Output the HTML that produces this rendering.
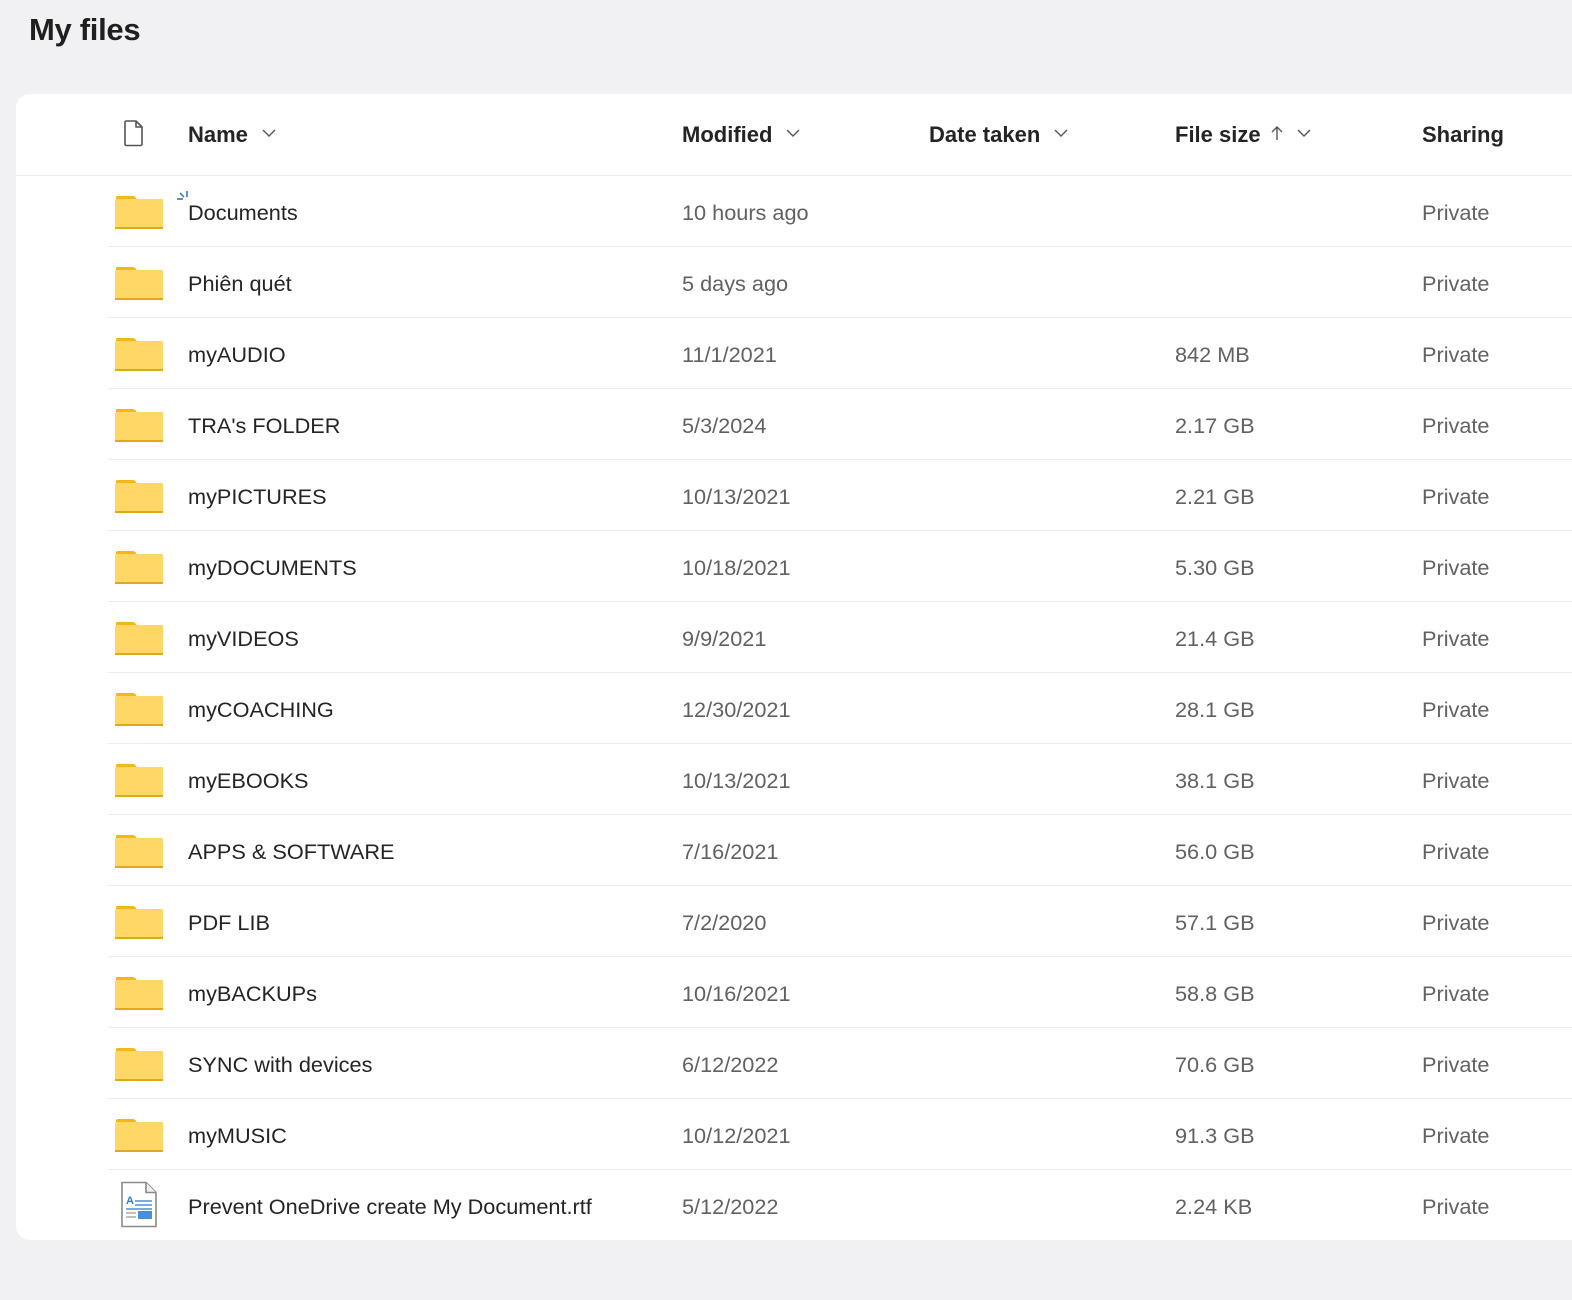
<!DOCTYPE html>
<html><head><meta charset="utf-8"><style>
*{margin:0;padding:0;box-sizing:border-box}
body{width:1572px;height:1300px;background:#f1f1f4;font-family:"Liberation Sans","DejaVu Sans",sans-serif;position:relative;overflow:hidden;color:#242424}
h1{position:absolute;left:29px;top:12px;font-size:31px;font-weight:600;color:#1f1f1f;letter-spacing:-0.3px}
.card{position:absolute;left:16px;top:94px;width:1600px;height:1146px;background:#fff;border-radius:14px}
.hdr{position:absolute;left:0;top:0;width:100%;height:82px;border-bottom:1px solid #ececec}
.h{position:absolute;top:28px;font-size:22px;font-weight:700;color:#242424;white-space:nowrap}
.chev{display:inline-block;vertical-align:middle;margin-left:14px;margin-top:-6px}
.row{position:absolute;left:92px;width:1600px;height:71px;border-bottom:1px solid #ebebeb}
.row span{position:absolute;top:24px;font-size:21.7px;white-space:nowrap}
.n{left:80px;color:#242424}
.m{left:574px;color:#616161}
.s{left:1067px;color:#616161}
.p{left:1314px;color:#616161}
.fold{position:absolute;left:7px;top:19px}
</style></head><body>
<h1>My files</h1>
<div class="card">
 <div class="hdr">
  <svg style="position:absolute;left:107px;top:25px" width="22" height="28" viewBox="0 0 22 28"><path d="M3 2h10l6 6v17a1.5 1.5 0 0 1-1.5 1.5h-14A1.5 1.5 0 0 1 2 25V3.5A1.5 1.5 0 0 1 3 2z M13 2v6h6" fill="none" stroke="#555" stroke-width="1.6" stroke-linejoin="round"/></svg>
  <div class="h" style="left:172px">Name<svg class="chev" width="14" height="9" viewBox="0 0 14 9"><path d="M1 1l6 6 6-6" fill="none" stroke="#555" stroke-width="1.4"/></svg></div>
  <div class="h" style="left:666px">Modified<svg class="chev" width="14" height="9" viewBox="0 0 14 9"><path d="M1 1l6 6 6-6" fill="none" stroke="#555" stroke-width="1.4"/></svg></div>
  <div class="h" style="left:913px">Date taken<svg class="chev" width="14" height="9" viewBox="0 0 14 9"><path d="M1 1l6 6 6-6" fill="none" stroke="#555" stroke-width="1.4"/></svg></div>
  <div class="h" style="left:1159px">File size<svg style="display:inline-block;vertical-align:middle;margin-left:10px;margin-top:-6px" width="12" height="16" viewBox="0 0 12 16"><path d="M6 15V2M1 7l5-5 5 5" fill="none" stroke="#555" stroke-width="1.4"/></svg><svg class="chev" width="14" height="9" viewBox="0 0 14 9"><path d="M1 1l6 6 6-6" fill="none" stroke="#555" stroke-width="1.4"/></svg></div>
  <div class="h" style="left:1406px">Sharing</div>
 </div>
</div>
<svg width="0" height="0" style="position:absolute"><defs><g id="f"><path d="M1 2.5Q1 1 2.5 1h15q3 0 4 3h-20.5z" fill="#f3b71a"/><rect x="0" y="4" width="48" height="30" rx="1.5" fill="#ffd767"/><rect x="0" y="32" width="48" height="2" fill="#e0a91a"/><path d="M0 4h20l4 3h24v-1.5Q48 4 46.5 4z" fill="#ffd767"/></g></defs></svg>
<div style="position:absolute;left:16px;top:176px">
<div class="row" style="top:0"><svg class="fold" width="48" height="34"><use href="#f"/></svg><svg style="position:absolute;left:68px;top:14px" width="14" height="12"><path d="M11 1v6M1 9h6M4 3l4 4" stroke="#2a6fb0" stroke-width="1.5" fill="none"/></svg><span class="n">Documents</span><span class="m">10 hours ago</span><span class="p">Private</span></div>
<div class="row" style="top:71px"><svg class="fold" width="48" height="34"><use href="#f"/></svg><span class="n">Phiên quét</span><span class="m">5 days ago</span><span class="p">Private</span></div>
<div class="row" style="top:142px"><svg class="fold" width="48" height="34"><use href="#f"/></svg><span class="n">myAUDIO</span><span class="m">11/1/2021</span><span class="s">842 MB</span><span class="p">Private</span></div>
<div class="row" style="top:213px"><svg class="fold" width="48" height="34"><use href="#f"/></svg><span class="n">TRA's FOLDER</span><span class="m">5/3/2024</span><span class="s">2.17 GB</span><span class="p">Private</span></div>
<div class="row" style="top:284px"><svg class="fold" width="48" height="34"><use href="#f"/></svg><span class="n">myPICTURES</span><span class="m">10/13/2021</span><span class="s">2.21 GB</span><span class="p">Private</span></div>
<div class="row" style="top:355px"><svg class="fold" width="48" height="34"><use href="#f"/></svg><span class="n">myDOCUMENTS</span><span class="m">10/18/2021</span><span class="s">5.30 GB</span><span class="p">Private</span></div>
<div class="row" style="top:426px"><svg class="fold" width="48" height="34"><use href="#f"/></svg><span class="n">myVIDEOS</span><span class="m">9/9/2021</span><span class="s">21.4 GB</span><span class="p">Private</span></div>
<div class="row" style="top:497px"><svg class="fold" width="48" height="34"><use href="#f"/></svg><span class="n">myCOACHING</span><span class="m">12/30/2021</span><span class="s">28.1 GB</span><span class="p">Private</span></div>
<div class="row" style="top:568px"><svg class="fold" width="48" height="34"><use href="#f"/></svg><span class="n">myEBOOKS</span><span class="m">10/13/2021</span><span class="s">38.1 GB</span><span class="p">Private</span></div>
<div class="row" style="top:639px"><svg class="fold" width="48" height="34"><use href="#f"/></svg><span class="n">APPS &amp; SOFTWARE</span><span class="m">7/16/2021</span><span class="s">56.0 GB</span><span class="p">Private</span></div>
<div class="row" style="top:710px"><svg class="fold" width="48" height="34"><use href="#f"/></svg><span class="n">PDF LIB</span><span class="m">7/2/2020</span><span class="s">57.1 GB</span><span class="p">Private</span></div>
<div class="row" style="top:781px"><svg class="fold" width="48" height="34"><use href="#f"/></svg><span class="n">myBACKUPs</span><span class="m">10/16/2021</span><span class="s">58.8 GB</span><span class="p">Private</span></div>
<div class="row" style="top:852px"><svg class="fold" width="48" height="34"><use href="#f"/></svg><span class="n">SYNC with devices</span><span class="m">6/12/2022</span><span class="s">70.6 GB</span><span class="p">Private</span></div>
<div class="row" style="top:923px"><svg class="fold" width="48" height="34"><use href="#f"/></svg><span class="n">myMUSIC</span><span class="m">10/12/2021</span><span class="s">91.3 GB</span><span class="p">Private</span></div>
<div class="row" style="top:994px;border-bottom:none"><svg style="position:absolute;left:12px;top:11px" width="38" height="48" viewBox="0 0 38 48"><path d="M2 1.5h24l10 10v34h-34z" fill="#fff" stroke="#8a8a8a" stroke-width="1.6" stroke-linejoin="round"/><path d="M26 1.5v10h10" fill="#f0f0f0" stroke="#8a8a8a" stroke-width="1.6"/><text x="6" y="23" font-family="Liberation Sans,sans-serif" font-size="11" font-weight="700" fill="#2f7fd0">A</text><path d="M15 20h17M15 24h17M6 28h26" stroke="#4a90d9" stroke-width="1.5"/><path d="M6 32h10M6 36h10" stroke="#aaa" stroke-width="1.5"/><rect x="18" y="30" width="14" height="8" fill="#4a90d9"/></svg><span class="n">Prevent OneDrive create My Document.rtf</span><span class="m">5/12/2022</span><span class="s">2.24 KB</span><span class="p">Private</span></div>
</div>
</body></html>
